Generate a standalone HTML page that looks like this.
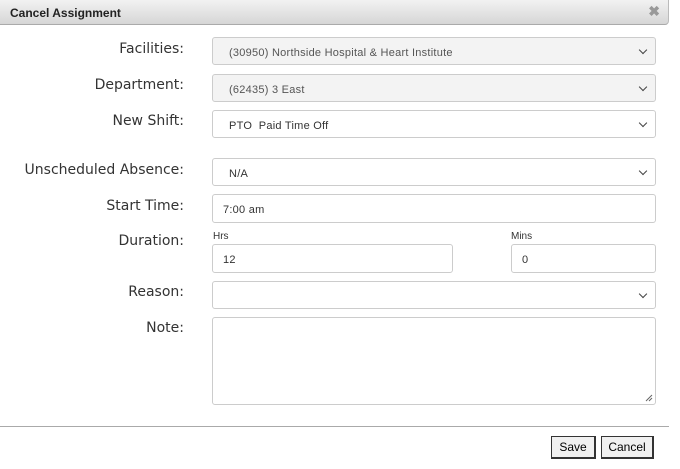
<!DOCTYPE html>
<html><head><style>
body{margin:0;width:680px;height:469px;background:#fff;font-family:"Liberation Sans",Arial,sans-serif;position:relative;overflow:hidden}
.hdr{position:absolute;left:0;top:0;width:669px;height:25px;background:linear-gradient(#f2f2f2,#d6d6d6);border-bottom:1px solid #aaa;border-right:1px solid #bbb;border-radius:0 0 4px 0;box-sizing:border-box}
.hdr span{position:absolute;left:10px;top:6px;font-size:12px;font-weight:bold;color:#222}
.hdr b{position:absolute;right:8px;top:3px;font-size:14px;color:#999}
.lbl{position:absolute;right:496px;font-family:"DejaVu Sans",sans-serif;font-size:14px;color:#333;text-align:right;margin-top:1px}
.f{position:absolute;left:212px;width:444px;height:28px;border:1px solid #ccc;border-radius:3px;box-sizing:border-box;font-size:11px;letter-spacing:0.25px;color:#333;padding:9px 0 0 16px;background:#fff}
.f.g{background:#f3f3f3;color:#555}
.f.s::after{content:"";position:absolute;right:9px;top:9px;width:5px;height:5px;border-right:1.5px solid #444;border-bottom:1.5px solid #444;transform:rotate(45deg)}
.t{padding-left:10px}
.small{position:absolute;font-size:10px;color:#333}
.btn{position:absolute;top:436px;height:23px;border:1px solid #333;border-right-width:2px;border-bottom-width:2px;background:#f0f0f0;font-size:12px;text-align:center;line-height:21px;box-sizing:border-box}
</style></head><body>
<div class="hdr"><span>Cancel Assignment</span><b>✖</b></div>
<div class="lbl" style="top:40px">Facilities:</div>
<div class="f g s" style="top:37px">(30950) Northside Hospital &amp; Heart Institute</div>
<div class="lbl" style="top:76px">Department:</div>
<div class="f g s" style="top:74px">(62435) 3 East</div>
<div class="lbl" style="top:112px">New Shift:</div>
<div class="f s" style="top:110px">PTO&nbsp; Paid Time Off</div>
<div class="lbl" style="top:161px">Unscheduled Absence:</div>
<div class="f s" style="top:158px">N/A</div>
<div class="lbl" style="top:197px">Start Time:</div>
<div class="f t" style="top:194px;height:29px">7:00 am</div>
<div class="lbl" style="top:232px">Duration:</div>
<div class="small" style="left:213px;top:231px">Hrs</div>
<div class="small" style="left:511px;top:231px">Mins</div>
<div class="f t" style="top:244px;width:241px;height:29px">12</div>
<div class="f t" style="top:244px;left:511px;width:145px;height:29px">0</div>
<div class="lbl" style="top:283px">Reason:</div>
<div class="f s" style="top:281px"></div>
<div class="lbl" style="top:319px">Note:</div>
<div class="f" style="top:317px;height:88px"><svg style="position:absolute;right:2px;bottom:2px" width="8" height="8"><path d="M1 7L7 1M4 7L7 4" stroke="#666" stroke-width="1"/></svg></div>
<div style="position:absolute;left:0;top:426px;width:669px;height:1px;background:#aaa"></div>
<div class="btn" style="left:551px;width:45px">Save</div>
<div class="btn" style="left:601px;width:53px">Cancel</div>
</body></html>
